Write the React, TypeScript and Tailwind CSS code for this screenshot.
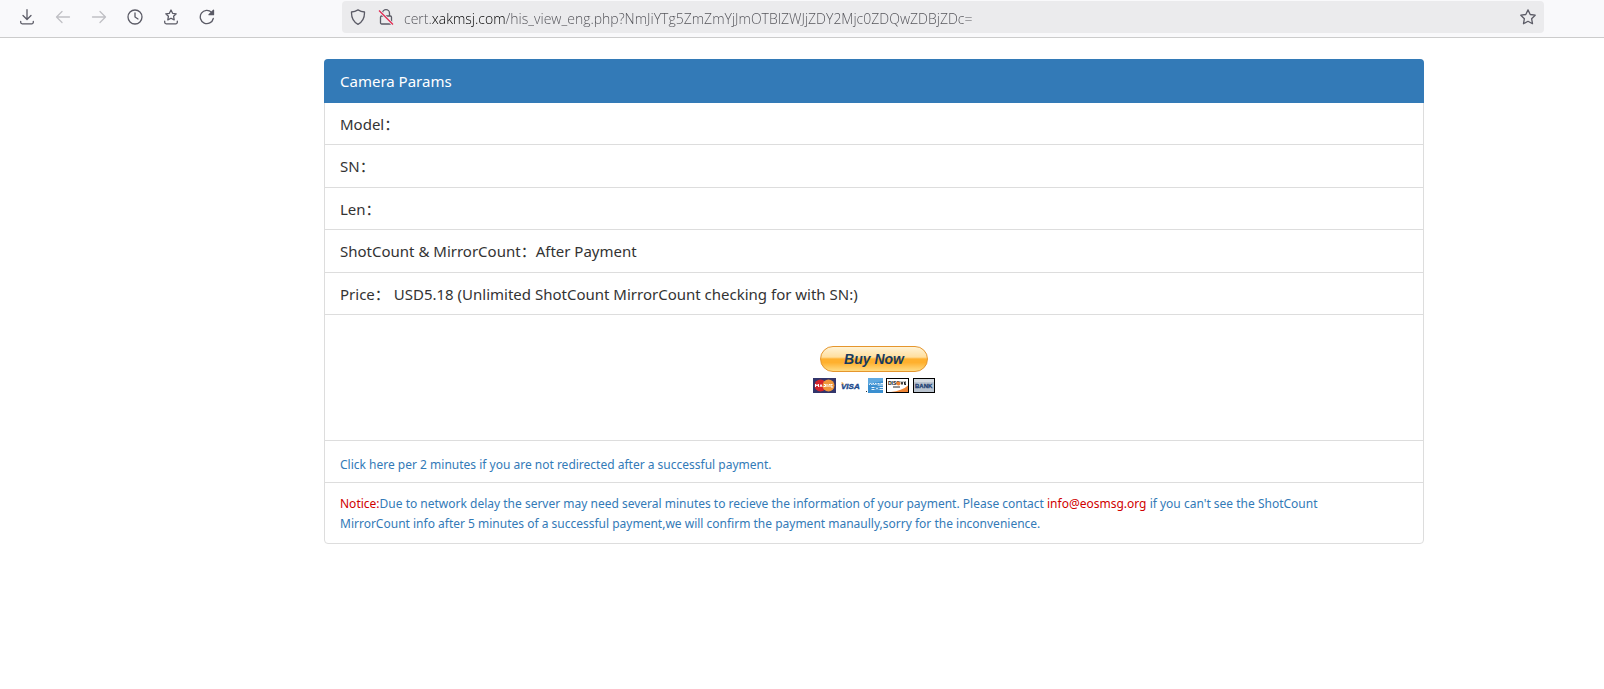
import type { ReactNode } from 'react';

const params = [
  { label: 'Model', value: '' },
  { label: 'SN', value: '' },
  { label: 'Len', value: '' },
  { label: 'ShotCount & MirrorCount', value: 'After Payment' },
  { label: 'Price', value: '\u00a0USD5.18 (Unlimited ShotCount MirrorCount checking for with SN:)' },
];

interface IconButtonProps {
  label: string;
  disabled?: boolean;
  children: ReactNode;
}

function IconButton({ label, disabled, children }: IconButtonProps) {
  return (
    <button
      type="button"
      aria-label={label}
      disabled={disabled}
      className="flex h-8 w-8 items-center justify-center rounded text-[#5b5b66] hover:bg-gray-200 disabled:text-[#c0c0c5]"
    >
      <svg
        width="16"
        height="16"
        viewBox="0 0 16 16"
        fill="none"
        stroke="currentColor"
        strokeWidth="1.3"
        strokeLinecap="round"
        strokeLinejoin="round"
      >
        {children}
      </svg>
    </button>
  );
}

function BrowserToolbar() {
  return (
    <header className="flex items-start border-b border-[#cccccc] bg-[#f9f9fb] pt-px pb-1 pl-[11px]">
      <nav className="flex w-[331px] shrink-0 gap-1" aria-label="Browser">
        <IconButton label="Downloads">
          <path d="M8 .7v9.6M4 6.500l4 4 4-4M1.700 12.500v.8a1.500 1.500 0 0 0 1.500 1.500h9.600a1.500 1.500 0 0 0 1.500-1.500v-.8" />
        </IconButton>
        <IconButton label="Back" disabled>
          <path d="M14.500 8H1.500M7 2.500L1.500 8 7 13.500" />
        </IconButton>
        <IconButton label="Forward" disabled>
          <path d="M1.500 8h13M9 2.500L14.500 8 9 13.500" />
        </IconButton>
        <IconButton label="History">
          <circle cx="8" cy="8" r="7" />
          <path d="M8 4v4l3 2" />
        </IconButton>
        <IconButton label="Bookmarks">
          <path d="M8 1l1.600 3.300 3.600.5-2.600 2.500.6 3.600L8 9.200l-3.200 1.700.6-3.600-2.600-2.500 3.600-.5zM1.700 12.200v1.100a1.500 1.500 0 0 0 1.500 1.500h9.600a1.500 1.500 0 0 0 1.500-1.500v-1.100" />
        </IconButton>
        <IconButton label="Reload">
          <path d="M14.300 9.500A6.600 6.600 0 1 1 12.600 3.400" />
          <path d="M14.500 1.200v4.500H10z" fill="currentColor" />
        </IconButton>
      </nav>

      <div className="mr-[60px] flex h-8 min-w-0 flex-1 items-center rounded bg-[#ebebed]">
        <svg className="ml-2 shrink-0" width="16" height="16" viewBox="0 0 16 16" fill="none" stroke="#5b5b66" strokeWidth="1.3" strokeLinejoin="round">
          <path d="M8 .9c2 1.200 4 1.900 6.500 2.100C14.700 8.600 12.500 13 8 15.300 3.500 13 1.300 8.600 1.500 3 4 2.800 6 2.100 8 .9z" />
        </svg>
        <svg className="ml-3 shrink-0" width="16" height="16" viewBox="0 0 16 16" fill="none" stroke="#5b5b66" strokeWidth="1.3">
          <path d="M4.500 7V4.200a3.500 3.500 0 0 1 7 0V7" />
          <rect x="2.500" y="7" width="11" height="8" rx="1.200" />
          <path d="M1 1.500l14 14" stroke="#ebebed" strokeWidth="3" />
          <path d="M1 1.500l14 14" stroke="#e22850" />
        </svg>
        {/* the host name is darker than the rest of the address */}
        <input
          type="text"
          aria-label="Address"
          defaultValue="cert.xakmsj.com/his_view_eng.php?NmJiYTg5ZmZmYjJmOTBlZWJjZDY2Mjc0ZDQwZDBjZDc="
          className="ml-[10px] h-8 min-w-0 flex-1 bg-[linear-gradient(90deg,#505056_27px,#000000_27px,#000000_101px,#505056_101px)] bg-clip-text pt-[2px] font-['Open_Sans','Noto_Sans',sans-serif] text-sm font-light text-transparent outline-none"
        />
        <button type="button" aria-label="Bookmark this page" className="flex h-8 w-8 shrink-0 items-center justify-center text-[#5b5b66]">
          <svg width="16" height="16" viewBox="0 0 16 16" fill="none" stroke="currentColor" strokeWidth="1.3" strokeLinejoin="round">
            <path d="M8 .9l2.200 4.600 5 .7-3.600 3.500.9 5L8 12.300l-4.500 2.400.9-5L.8 6.200l5-.7z" />
          </svg>
        </button>
      </div>
    </header>
  );
}

function PaymentCards() {
  return (
    <svg
      className="mt-[6px]"
      width="122"
      height="15"
      viewBox="0 0 122 15"
      fontFamily="'Liberation Sans', sans-serif"
      fontWeight="bold"
      role="img"
      aria-label="MasterCard, Visa, American Express, Discover, Bank"
    >
      {/* MasterCard */}
      <rect width="23" height="15" fill="#32356b" />
      <circle cx="7.500" cy="7.500" r="6" fill="#d5232b" />
      <circle cx="15.500" cy="7.500" r="6" fill="#f0973a" />
      <path d="M2.500 9V6l1.500 2 1.500-2v3M7 9l1-2.500L9 9M10.500 8.500h2v-2h-1.500M14 6v3M16 9V6.500h1.500M19.500 6.500H18V9h2" fill="none" stroke="#fff" strokeWidth="1" />

      {/* Visa */}
      <text x="28" y="11" fontSize="8" fontStyle="italic" fill="#1b4a8c" stroke="#1b4a8c" strokeWidth=".4">VISA</text>
      <path d="M28 4.500h2l1 3z" fill="#e9a13b" />

      {/* American Express */}
      <rect x="53" y="13" width="1" height="1" fill="#333" />
      <rect x="55" width="15" height="15" fill="#3a8fd0" />
      <path d="M55 0h15v3l-15 3z" fill="#5fa9e0" />
      <path d="M56 7l1.500-2L59 7M60 7V5l1.500 1.500L63 5v2M64.500 5.500h2M67.500 5.500H70M64.500 7H70M58.500 9.500h3M58.500 11.500h3M63 9.500l2 2M65 9.500l-2 2M66.500 9.500H70M66.500 11.500H70" fill="none" stroke="#e6f3fc" strokeWidth="1" />

      {/* Discover */}
      <rect x="73.500" y=".5" width="22" height="14" fill="#fff" stroke="#000" />
      <path d="M95 7.500V14H78c7-.8 13-3 17-6.500z" fill="#ee8434" />
      <text x="75" y="7" fontSize="5" fill="#111">DISC</text>
      <circle cx="85.500" cy="5.500" r="2" fill="#ee8434" />
      <path d="M88 3.500l1 3 1-3M93 4h-1.500v2.500H93M91.500 5.200H93M80 9h7" fill="none" stroke="#111" strokeWidth=".9" />

      {/* Bank */}
      <rect x="100.500" y=".5" width="21" height="14" fill="#b9c3cf" stroke="#000" />
      <path d="M101 1h20v3h-20z" fill="#d3d9e0" />
      <text x="102" y="10" fontSize="6" fill="#1d3f73" stroke="#1d3f73" strokeWidth=".3">BANK</text>
    </svg>
  );
}

export default function App() {
  return (
    <div className="min-h-screen bg-white font-['Noto_Sans','Noto_Sans_CJK_SC',sans-serif] text-[#333333]">
      <BrowserToolbar />

      <main className="pt-[21px] pl-36">
        <section className="mx-auto max-w-[1100px] rounded border border-[#dddddd]">
          <h1 className="-mx-px -mt-px rounded-t bg-[#337ab7] px-4 py-[11px] text-[15px] leading-[22px] text-white">Camera Params</h1>

          <dl className="text-[15px] leading-[21px]">
            {params.map(({ label, value }) => (
              <div key={label} className="flex border-b border-[#dddddd] px-[15px] pt-[11px] pb-[9px] even:pb-[10px]">
                <dt>{label}：</dt>
                <dd>{value}</dd>
              </div>
            ))}
          </dl>

          <form className="flex h-[126px] flex-col items-center border-b border-[#dddddd] pt-[31px]" onSubmit={(e) => e.preventDefault()}>
            <button
              type="submit"
              className="h-[26px] w-[108px] rounded-full border border-[#e5962d] bg-[linear-gradient(180deg,#fff3d6_0%,#ffdf9f_42%,#ffb02e_50%,#ffb02e_65%,#ffdc84_100%)] font-['Liberation_Sans',sans-serif] text-sm leading-6 font-bold text-[#163a5f] italic"
            >
              Buy Now
            </button>
            <PaymentCards />
          </form>

          <p className="border-b border-[#dddddd] px-[15px] pt-[14px] pb-[7px] text-xs leading-5">
            <a href="#refresh" className="text-[#337ab7]">Click here per 2 minutes if you are not redirected after a successful payment.</a>
          </p>

          <p className="px-[15px] pt-[11px] pb-[9px] text-xs leading-5 text-[#337ab7]">
            <span className="text-[#d00000]">Notice:</span>Due to network delay the server may need several minutes to recieve the information of your payment. Please contact{' '}
            <a href="mailto:info@eosmsg.org" className="text-[#d00000]">info@eosmsg.org</a> if you can't see the ShotCount
            <br />
            MirrorCount info after 5 minutes of a successful payment,we will confirm the payment manaully,sorry for the inconvenience.
          </p>
        </section>
      </main>
    </div>
  );
}
